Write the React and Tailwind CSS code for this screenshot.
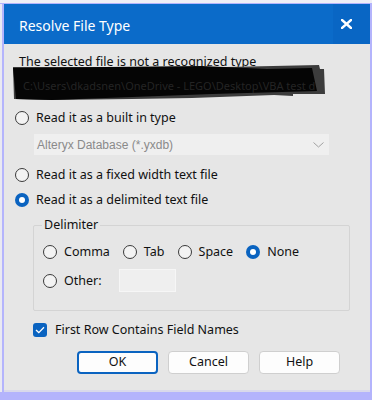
import React from 'react'

const font = { fontFamily: '"Noto Sans", "Open Sans", sans-serif' }

function Radio({ checked }) {
  if (checked) {
    return (
      <span className="w-[14px] h-[14px] rounded-full bg-[#0a63c0] flex items-center justify-center shrink-0">
        <span className="w-[6px] h-[6px] rounded-full bg-white" />
      </span>
    )
  }
  return <span className="w-[14px] h-[14px] rounded-full border border-[#3a3a3a] bg-[#f3f3f3] shrink-0" />
}

function RadioRow({ label, checked, className = '' }) {
  return (
    <div className={`flex items-center h-4 ${className}`}>
      <Radio checked={checked} />
      <span className="ml-[7px] text-[12.5px] text-[#111] leading-4 whitespace-nowrap">{label}</span>
    </div>
  )
}

function Button({ label, primary }) {
  return (
    <button
      className={`w-[81px] h-[23px] rounded-[4px] bg-[#fdfdfd] text-[12.5px] text-[#111] leading-none ${
        primary ? 'border-2 border-[#0a63c0]' : 'border border-[#cfcfcf]'
      }`}
    >
      {label}
    </button>
  )
}

export default function App() {
  return (
    <div className="w-[372px] h-[400px] bg-[#b4b4fc] overflow-hidden" style={font}>
      <div className="h-[3px] bg-[#efeff6]" />
      <div className="flex mt-[1px]">
        <div className="w-[2px] h-[388px] bg-[#e9e9f2]" />
        <div className="ml-[2px] w-[366px] h-[388px] flex flex-col bg-[#e6e6e6] border-b-2 border-[#d9d9ea]">
          {/* title bar */}
          <div className="h-10 bg-[#0b6bc9] flex items-center shrink-0">
            <span className="ml-[15px] mt-[3px] text-[14px] text-white">Resolve File Type</span>
            <div className="ml-auto w-[37px] h-10 bg-[#0966c4] flex items-center pl-[8px]">
              <svg width="11" height="10" viewBox="0 0 11 10">
                <path d="M1 1 L10 9 M10 1 L1 9" stroke="white" strokeWidth="2.4" strokeLinecap="square" />
              </svg>
            </div>
          </div>

          {/* body */}
          <div className="flex flex-col pl-[11px] pr-4">
            <div className="mt-[10px] h-4 text-[12.5px] text-[#111] leading-4 pl-[4px] whitespace-nowrap">
              The selected file is not a recognized type
            </div>
            <div className="relative h-[30px]">
              <svg
                className="absolute left-[-3px] top-[-5px] w-[320px] h-[36px]"
                width="320"
                height="36"
                viewBox="0 0 320 36"
              >
                <polygon points="215,2 307,0 308,4 312,4 313,29 281,29 281,31 262,30 180,33 120,34 40,35 2,34 1,2" fill="#3c3c3c" />
                <polygon points="1,3 190,1 255,4 300,3 305,26 270,27 200,29 120,32 40,35 4,34" fill="#050505" />
              </svg>
              <span className="absolute left-[8px] top-[8px] text-[11px] text-[#242424] leading-4 whitespace-nowrap">
                C:\Users\dkadsnen\OneDrive - LEGO\Desktop\VBA test d
              </span>
            </div>

            <RadioRow label="Read it as a built in type" className="mt-[10px]" />

            <div className="ml-[19px] mt-[8px] w-[295px] h-[21px] bg-[#efefef] flex items-center pl-[3px] pr-[4px]">
              <span
                className="text-[12px] text-[#8a8a8a] leading-none"
                style={{ fontFamily: '"Liberation Sans", Arial, sans-serif' }}
              >
                Alteryx Database (*.yxdb)
              </span>
              <svg className="ml-auto mr-[1px]" width="11" height="6" viewBox="0 0 11 6">
                <path d="M0.5 0.5 L5.5 5 L10.5 0.5" stroke="#a0a0a0" strokeWidth="1" fill="none" />
              </svg>
            </div>

            <RadioRow label="Read it as a fixed width text file" className="mt-[12px]" />
            <RadioRow label="Read it as a delimited text file" checked className="mt-[9px]" />

            {/* delimiter group */}
            <div className="relative ml-[18px] mt-[17px] w-[317px] h-[86px] border border-[#d4d4d4] rounded-[2px] flex flex-col pl-[9px]">
              <span className="absolute left-[8px] top-[-9px] px-[2px] bg-[#e6e6e6] text-[12.5px] text-[#111] leading-4">
                Delimiter
              </span>
              <div className="flex mt-[18px]">
                <RadioRow label="Comma" />
                <RadioRow label="Tab" className="ml-[13px]" />
                <RadioRow label="Space" className="ml-[13px]" />
                <RadioRow label="None" checked className="ml-[13px]" />
              </div>
              <div className="flex items-center mt-[9px] h-[23px]">
                <RadioRow label="Other:" />
                <div className="ml-[17px] w-[57px] h-[23px] bg-[#efefef] border border-[#f6f6f6]" />
              </div>
            </div>

            {/* checkbox */}
            <div className="flex items-center h-4 mt-[11px] ml-[18px]">
              <span className="w-[14px] h-[14px] rounded-[3px] bg-[#0a63c0] flex items-center justify-center shrink-0">
                <svg width="10" height="8" viewBox="0 0 10 8">
                  <path d="M1 4 L3.8 6.6 L9 1.2" stroke="white" strokeWidth="1.3" fill="none" />
                </svg>
              </span>
              <span className="ml-[8px] text-[12.5px] text-[#111] leading-4">First Row Contains Field Names</span>
            </div>

            {/* buttons */}
            <div className="flex gap-[10px] mt-[13px] ml-[62px]">
              <Button label="OK" primary />
              <Button label="Cancel" />
              <Button label="Help" />
            </div>
          </div>
        </div>
      </div>
    </div>
  )
}
